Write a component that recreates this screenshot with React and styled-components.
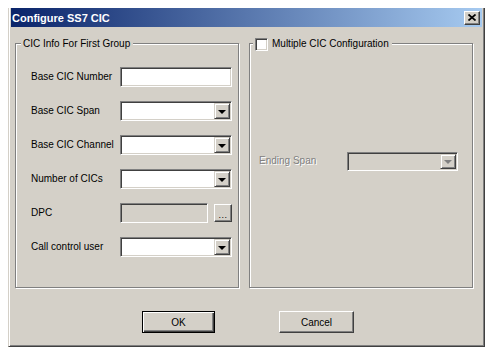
import styled, { createGlobalStyle } from "styled-components";

const GlobalStyle = createGlobalStyle`
  body {
    margin: 8px;
    background: #ffffff;
    font-family: "Liberation Sans", Arial, sans-serif;
    font-size: 10px;
    color: #000000;
  }
`;

const Window = styled.div`
  width: 477px;
  height: 339px;
  box-sizing: border-box;
  background: #d4d0c8;
  border: 1px solid;
  border-top: none;
  border-color: #d4d0c8 #404040 #404040 #d4d0c8;
  box-shadow: inset 1px 0 0 #ffffff, inset -1px -1px 0 #808080;
  padding: 0 2px 2px 2px;
  display: flex;
  flex-direction: column;
`;

const TitleBar = styled.div`
  height: 19px;
  display: flex;
  align-items: center;
  justify-content: space-between;
  padding: 0 2px 0 1px;
  background: linear-gradient(to right, #0a246a, #a6caf0);
  color: #ffffff;
  font-weight: bold;
  font-size: 11px;
`;

const CloseButton = styled.div`
  width: 16px;
  height: 14px;
  box-sizing: border-box;
  background: #d4d0c8;
  border: 1px solid;
  border-color: #ffffff #404040 #404040 #ffffff;
  box-shadow: inset -1px -1px 0 #808080;
  display: flex;
  align-items: center;
  justify-content: center;
`;

const Content = styled.div`
  padding: 10px 7px 0 4px;
  display: flex;
  flex-direction: column;
`;

const Groups = styled.div`
  display: flex;
  gap: 10px;
`;

const Group = styled.fieldset`
  margin: 0;
  padding: 0;
  width: 224px;
  height: 251px;
  box-sizing: border-box;
  min-width: 0;
  border: 1px solid #808080;
  box-shadow: 1px 1px 0 #ffffff, inset 1px 1px 0 #ffffff;
`;

const Caption = styled.legend`
  margin-left: ${(p) => p.$offset}px;
  padding: 0 3px 0 2px;
  line-height: 13px;
  height: 13px;
  background: #d4d0c8;
  display: flex;
  align-items: center;
  gap: 4px;
  white-space: nowrap;
`;

const CheckBox = styled.span`
  width: 13px;
  height: 13px;
  box-sizing: border-box;
  background: #ffffff;
  border: 1px solid;
  border-color: #808080 #ffffff #ffffff #808080;
  box-shadow: inset 1px 1px 0 #404040, inset -1px -1px 0 #d4d0c8;
  margin-top: 2px;
`;

const GroupBody = styled.div`
  display: flex;
  flex-direction: column;
  gap: 14px;
  padding: ${(p) => p.$pad};
`;

const Row = styled.div`
  display: flex;
  align-items: center;
  height: 20px;
`;

const Label = styled.span`
  width: ${(p) => p.$width}px;
  flex-shrink: 0;
  margin-top: -2px;
  white-space: nowrap;
  color: ${(p) => (p.$disabled ? "#808080" : "#000000")};
  text-shadow: ${(p) => (p.$disabled ? "1px 1px 0 #ffffff" : "none")};
`;

const Field = styled.div`
  width: ${(p) => p.$width}px;
  height: ${(p) => p.$height || 20}px;
  box-sizing: border-box;
  background: ${(p) => (p.$disabled ? "#d4d0c8" : "#ffffff")};
  border: 1px solid;
  border-color: #808080 #ffffff #ffffff #808080;
  box-shadow: inset 1px 1px 0 #404040, inset -1px -1px 0 #d4d0c8;
  display: flex;
  justify-content: flex-end;
  padding: 1px;
`;

const DropButton = styled.div`
  width: 16px;
  height: 100%;
  box-sizing: border-box;
  background: #d4d0c8;
  border: 1px solid;
  border-color: #d4d0c8 #404040 #404040 #d4d0c8;
  box-shadow: inset 1px 1px 0 #ffffff, inset -1px -1px 0 #808080;
  display: flex;
  align-items: center;
  justify-content: center;
`;

const Arrow = styled.span`
  width: 0;
  height: 0;
  border-left: 4px solid transparent;
  border-right: 4px solid transparent;
  border-top: 4px solid ${(p) => (p.$disabled ? "#808080" : "#000000")};
  margin-top: 1px;
`;

const SmallButton = styled.div`
  width: 18px;
  height: 18px;
  margin-left: 6px;
  box-sizing: border-box;
  background: #d4d0c8;
  border: 1px solid;
  border-color: #ffffff #404040 #404040 #ffffff;
  box-shadow: inset -1px -1px 0 #808080;
  display: flex;
  align-items: flex-end;
  justify-content: center;
  font-size: 9px;
  line-height: 12px;
  letter-spacing: 0.5px;
`;

const ButtonRow = styled.div`
  display: flex;
  justify-content: center;
  gap: 64px;
  margin-top: 23px;
  padding-left: 6px;
`;

const PushButton = styled.div`
  width: ${(p) => p.$width}px;
  height: 22px;
  box-sizing: border-box;
  background: #d4d0c8;
  border: 1px solid;
  border-color: ${(p) =>
    p.$default ? "#000000" : "#ffffff #404040 #404040 #ffffff"};
  box-shadow: ${(p) =>
    p.$default
      ? "inset 1px 1px 0 #ffffff, inset -1px -1px 0 #404040, inset -2px -2px 0 #808080"
      : "inset -1px -1px 0 #808080"};
  display: flex;
  align-items: center;
  justify-content: center;
`;

const Combo = ({ width, height, disabled }) => (
  <Field $width={width} $height={height} $disabled={disabled}>
    <DropButton>
      <Arrow $disabled={disabled} />
    </DropButton>
  </Field>
);

const rows = [
  { label: "Base CIC Number", kind: "edit" },
  { label: "Base CIC Span", kind: "combo" },
  { label: "Base CIC Channel", kind: "combo" },
  { label: "Number of CICs", kind: "combo" },
  { label: "DPC", kind: "dpc" },
  { label: "Call control user", kind: "combo" },
];

export default function App() {
  return (
    <>
      <GlobalStyle />
      <Window>
        <TitleBar>
          <span>Configure SS7 CIC</span>
          <CloseButton>
            <svg width="8" height="7" viewBox="0 0 8 7">
              <path d="M0.5 0.5 L7.5 6.5 M7.5 0.5 L0.5 6.5" stroke="#000" strokeWidth="1.7" />
            </svg>
          </CloseButton>
        </TitleBar>
        <Content>
          <Groups>
            <Group>
              <Caption $offset={5}>CIC Info For First Group</Caption>
              <GroupBody $pad="17px 6px 0 15px">
                {rows.map((r) => (
                  <Row key={r.label}>
                    <Label $width={89}>{r.label}</Label>
                    {r.kind === "edit" && <Field $width={112} />}
                    {r.kind === "combo" && <Combo width={112} />}
                    {r.kind === "dpc" && (
                      <>
                        <Field $width={88} $disabled />
                        <SmallButton>...</SmallButton>
                      </>
                    )}
                  </Row>
                ))}
              </GroupBody>
            </Group>
            <Group>
              <Caption $offset={3}>
                <CheckBox />
                Multiple CIC Configuration
              </Caption>
              <GroupBody $pad="101px 6px 0 9px">
                <Row>
                  <Label $width={88} $disabled>
                    Ending Span
                  </Label>
                  <Combo width={111} height={19} disabled />
                </Row>
              </GroupBody>
            </Group>
          </Groups>
          <ButtonRow>
            <PushButton $width={73} $default>
              OK
            </PushButton>
            <PushButton $width={75}>Cancel</PushButton>
          </ButtonRow>
        </Content>
      </Window>
    </>
  );
}
